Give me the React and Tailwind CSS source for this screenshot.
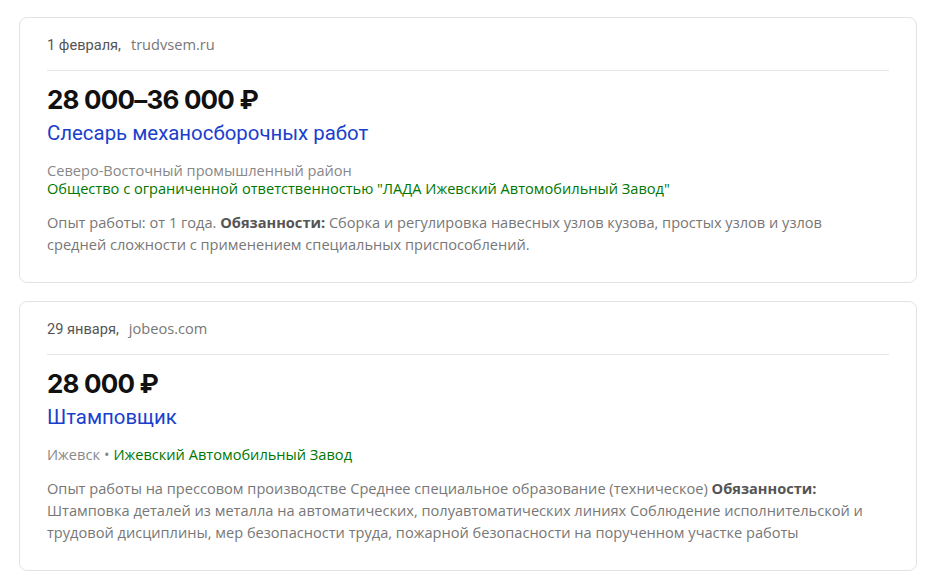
import React from 'react';

const vacancies = [
  {
    date: '1 февраля,',
    source: 'trudvsem.ru',
    salary: '28 000–36 000 ₽',
    title: 'Слесарь механосборочных работ',
    place: 'Северо-Восточный промышленный район',
    company: 'Общество с ограниченной ответственностью "ЛАДА Ижевский Автомобильный Завод"',
    inline: false,
    pre: 'Опыт работы: от 1 года. ',
    post: ' Сборка и регулировка навесных узлов кузова, простых узлов и узлов средней сложности с применением специальных приспособлений.',
  },
  {
    date: '29 января,',
    source: 'jobeos.com',
    salary: '28 000 ₽',
    title: 'Штамповщик',
    place: 'Ижевск',
    company: 'Ижевский Автомобильный Завод',
    inline: true,
    pre: 'Опыт работы на прессовом производстве Среднее специальное образование (техническое) ',
    post: ' Штамповка деталей из металла на автоматических, полуавтоматических линиях Соблюдение исполнительской и трудовой дисциплины, мер безопасности труда, пожарной безопасности на порученном участке работы',
  },
];

const VacancyCard = ({ v }) => (
  <div className="bg-white border border-[#e3e3e3] rounded-lg px-[27px] pt-[16px] pb-[27px]">
    <div className="text-[14.6px] leading-[20px] pb-[15px] border-b border-[#e6e6e6]">
      <span className="text-[#555] font-['Roboto',sans-serif]">{v.date}</span>
      <span className="ml-[10px] text-[#777] font-['Open_Sans',sans-serif]">{v.source}</span>
    </div>
    <div className="mt-[14px] text-[26px] leading-[30px] font-bold text-[#111] font-['Inter',sans-serif] tracking-[-0.8px]">
      {v.salary}
    </div>
    <div className="mt-[5px] text-[20.4px] leading-[26px] text-[#1a3fcc] font-['Roboto',sans-serif]">
      {v.title}
    </div>
    <div className="mt-[15px] text-[14.6px] leading-[18px] font-['Open_Sans',sans-serif]">
      {v.inline ? (
        <div>
          <span className="text-[#888]">{v.place}</span>
          <span className="text-[#888] mx-[4px]">•</span>
          <span className="text-[#007700]">{v.company}</span>
        </div>
      ) : (
        <>
          <div className="text-[#888]">{v.place}</div>
          <div className="text-[#007700]">{v.company}</div>
        </>
      )}
    </div>
    <p className="mt-[14px] text-[14.6px] leading-[22px] text-[#777] font-['Open_Sans',sans-serif] pr-[20px]">
      {v.pre}
      <b className="font-bold text-[#555]">Обязанности:</b>
      {v.post}
    </p>
  </div>
);

const App = () => {
  return (
    <div className="min-h-screen bg-white px-[19px] pt-[17px] w-[936px] flex flex-col gap-[18px]">
      {vacancies.map((v) => (
        <VacancyCard key={v.title} v={v} />
      ))}
    </div>
  );
};

export default App;
